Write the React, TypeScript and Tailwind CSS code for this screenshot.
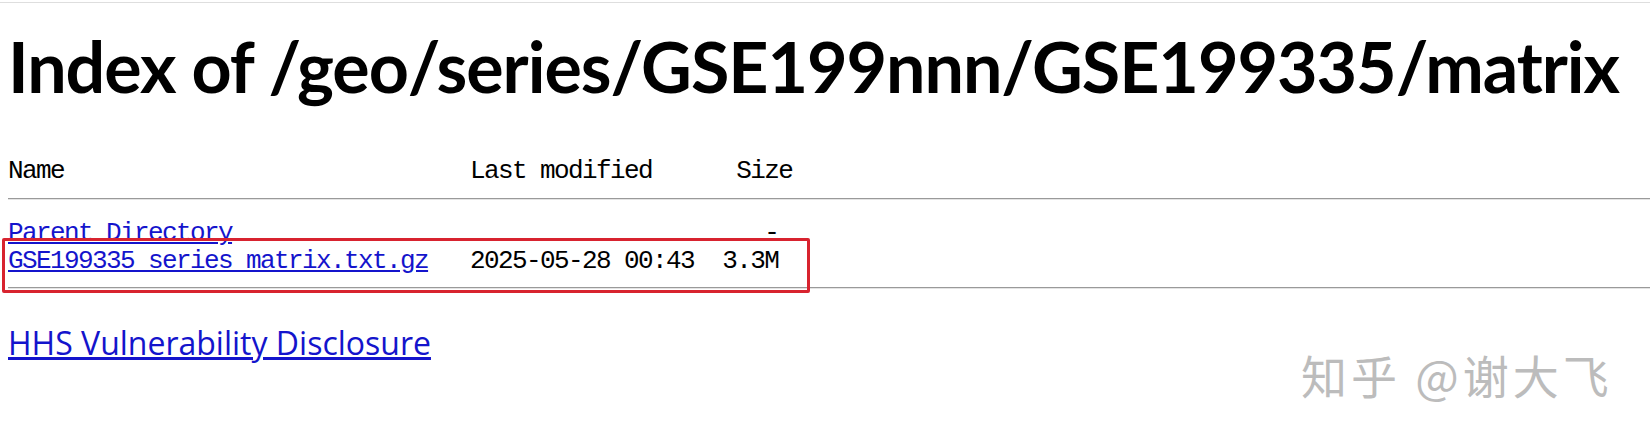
const mono = "font-['Liberation_Mono',monospace] text-[26px] leading-[28px] tracking-[-1.6px] text-black";
const link = "text-[#1414cc] underline";

export default function App() {
  return (
    <div className="relative min-h-[448px] overflow-hidden bg-white">
      <div className="mt-[2px] h-px bg-[#dedede]" />
      <div className="pl-2">
        <h1 className="mt-[28px] whitespace-nowrap font-['Lato',sans-serif] text-[70px] font-bold leading-[70px] tracking-[-1.05px] text-black">
          Index of /geo/series/GSE199nnn/GSE199335/matrix
        </h1>
        <pre className={`mt-[56px] whitespace-pre ${mono}`}>
          {"Name                             Last modified      Size"}
        </pre>
        <div className="mt-[13px] h-[2px] border-t border-t-[#9a9a9a] border-b border-b-[#e4e4e4]" />
        <pre className={`mt-[19px] whitespace-pre ${mono}`}>
          <a className={link} href="#">Parent Directory</a>
          {"                                      -"}
        </pre>
        <pre className={`whitespace-pre ${mono}`}>
          <a className={link} href="#">GSE199335_series_matrix.txt.gz</a>
          {"   2025-05-28 00:43  3.3M"}
        </pre>
        <div className="mt-[12px] h-[2px] border-t border-t-[#9a9a9a] border-b border-b-[#e4e4e4]" />
        <div className="mt-[38px]">
          <a className="font-['Open_Sans',sans-serif] text-[32px] leading-[32px] text-[#1414cc] underline" href="#">
            HHS Vulnerability Disclosure
          </a>
        </div>
      </div>

      {/* highlight box drawn over the listing */}
      <div className="pointer-events-none absolute left-[2px] top-[238px] h-[55px] w-[808px] rounded-[2px] border-[3px] border-[#d8232f]" />

      {/* watermark */}
      <div className="pointer-events-none absolute left-[1301px] top-[351px] whitespace-nowrap font-['Noto_Sans_CJK_SC',sans-serif] text-[46px] leading-[46px] tracking-[4px] text-[#bcbcbc]">
        知乎 @谢大飞
      </div>
    </div>
  );
}
